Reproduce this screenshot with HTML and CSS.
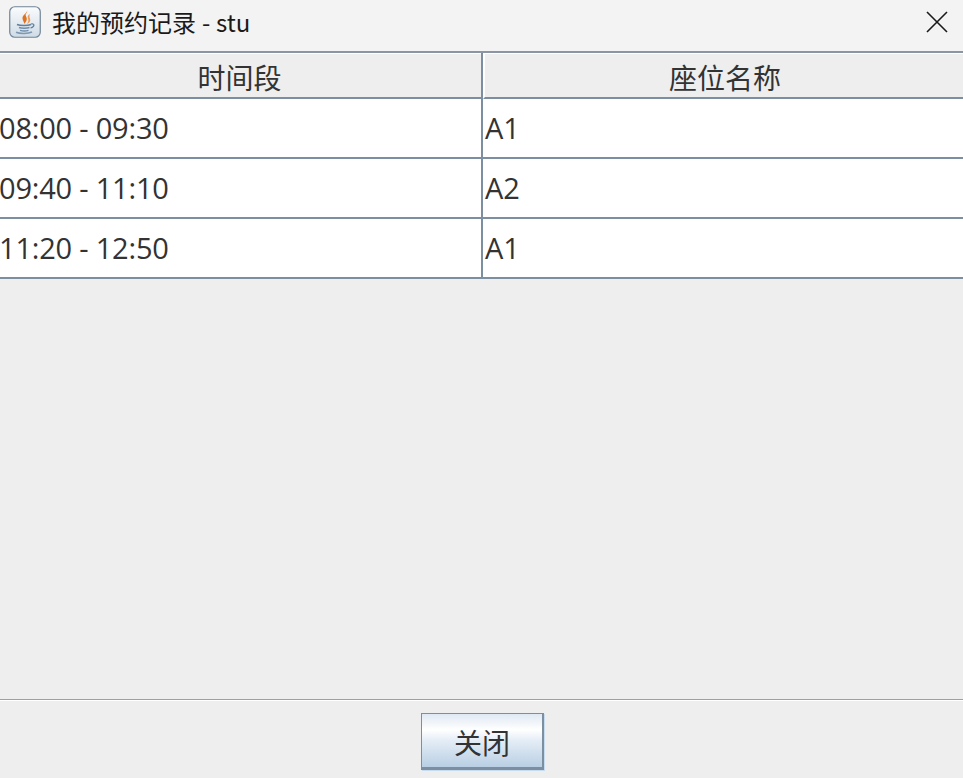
FILE: index.html
```
<!DOCTYPE html>
<html lang="zh-CN">
<head>
<meta charset="utf-8">
<title>我的预约记录 - stu</title>
<link rel="stylesheet" href="styles.css">
</head>
<body>
<div class="window">
  <header class="titlebar">
    <svg class="app-icon" width="32" height="32" viewBox="0 0 32 32">
      <defs>
        <linearGradient id="bg" x1="0" y1="0" x2="0" y2="1">
          <stop offset="0" stop-color="#fbfcfd"/>
          <stop offset="1" stop-color="#cfdbe6"/>
        </linearGradient>
      </defs>
      <rect x="0.75" y="0.75" width="30.500" height="30.500" rx="5" fill="url(#bg)" stroke="#6f8496" stroke-width="1.200"/>
      <path d="M18 4c1 3-5 5-4.500 8.500 .2 1.800 1.500 3.500 2 5.500 1-2 3-3.500 2-6.500-.7-2-1.500-2.500 -.3-4 .8-1 1.300-2.300 .8-3.500z" fill="#e2711d"/>
      <path d="M21 8c-2 1-3 2.500-2 4.500 .8 1.600 .3 3.500 -1 5.500 2.500-1.200 4-3 3-5.500-.6-1.500-.9-3 0-4.500z" fill="#ec9a58"/>
      <path d="M8 18.500c3 1.300 11 1.300 14 0" fill="none" stroke="#5f7f9e" stroke-width="1.500"/>
      <path d="M10 21.500c2.500 .9 8 .9 10.500 0" fill="none" stroke="#6f8dab" stroke-width="1.500"/>
      <path d="M11 24.300c2.200 .7 6.500 .7 8.500 0" fill="none" stroke="#6f8dab" stroke-width="1.300"/>
      <path d="M22 18c3.500-1 4.500 2.500 -.5 4" fill="none" stroke="#5f7f9e" stroke-width="1.200"/>
      <path d="M7 26.300c4 1.600 12 1.600 16 -.3" fill="none" stroke="#7d98b0" stroke-width="1.500"/>
    </svg>
    <span class="title">我的预约记录 - stu</span>
    <svg class="close" width="22" height="22" viewBox="0 0 22 22">
      <path d="M1 1l20 20M21 1L1 21" stroke="#1a1a1a" stroke-width="1.600" fill="none"/>
    </svg>
  </header>
  <section class="table">
    <div class="head cell-l">时间段</div>
    <div class="head cell-r">座位名称</div>
    <div class="cell cell-l">08:00 - 09:30</div>
    <div class="cell cell-r">A1</div>
    <div class="cell cell-l">09:40 - 11:10</div>
    <div class="cell cell-r">A2</div>
    <div class="cell cell-l">11:20 - 12:50</div>
    <div class="cell cell-r">A1</div>
  </section>
  <div class="spacer"></div>
  <footer class="footer">
    <button class="btn" type="button">关闭</button>
  </footer>
</div>
</body>
</html>
```
FILE: styles.css
```
* { box-sizing: border-box; }
html, body { margin: 0; padding: 0; }
body {
  width: 963px;
  height: 778px;
  overflow: hidden;
  font-family: "Open Sans", "Noto Sans CJK SC", sans-serif;
  color: #333333;
  background: #eeeeee;
}
.window {
  display: flex;
  flex-direction: column;
  height: 778px;
}
.titlebar {
  height: 53px;
  flex: none;
  display: flex;
  align-items: center;
  padding: 0 15px 7px 9px;
  background: #f3f3f3;
  border-bottom: 2px solid #8a96a3;
}
.app-icon { flex: none; }
.title {
  margin-left: 11px;
  flex: 1;
  font-size: 24px;
  line-height: 32px;
  word-spacing: 0.5px;
  color: #1a1a1a;
  font-family: "Noto Sans CJK SC", sans-serif;
}
.close { flex: none; }
.table {
  flex: none;
  display: grid;
  grid-template-columns: 483px 480px;
  grid-template-rows: 46px 60px 60px 60px;
  background: #ffffff;
}
.head, .cell {
  border-bottom: 2px solid #7c8fa1;
  display: flex;
  align-items: center;
  font-size: 28px;
}
.head {
  justify-content: center;
  padding-top: 3px;
  background: #eeeeee;
  font-family: "Noto Sans CJK SC", sans-serif;
  box-shadow: inset 0 1px 0 #ffffff;
}
.cell {
  background: #ffffff;
  font-size: 29px;
  letter-spacing: -0.2px;
  margin-left: -1px;
  padding-bottom: 2px;
}
.cell-l { border-right: 2px solid #7c8fa1; }
.head.cell-l { padding-right: 2px; }
.cell.cell-r {
  margin-left: 0;
  padding-left: 2px;
}
.head.cell-r { padding-left: 2px; border-left: 2px solid #ffffff; }
.spacer {
  flex: 1;
  background: #eeeeee;
}
.footer {
  flex: none;
  height: 79px;
  border-top: 1px solid #98a0a8;
  box-shadow: inset 0 1px 0 #ffffff;
  background: #eeeeee;
  display: flex;
  justify-content: center;
  padding: 13px 0 0 2px;
}
.btn {
  width: 123px;
  height: 57px;
  padding: 2px 0 0 0;
  border: 1px solid #7c8fa1;
  border-bottom-width: 3px;
  border-right-width: 2px;
  box-shadow: 1px 1px 0 #c8dcef;
  background: linear-gradient(to bottom, #dfe9f3 0%, #ffffff 30%, #e4edf6 50%, #b9cfe4 100%);
  color: #333333;
  font-family: "Noto Sans CJK SC", sans-serif;
  font-size: 28px;
}
```
